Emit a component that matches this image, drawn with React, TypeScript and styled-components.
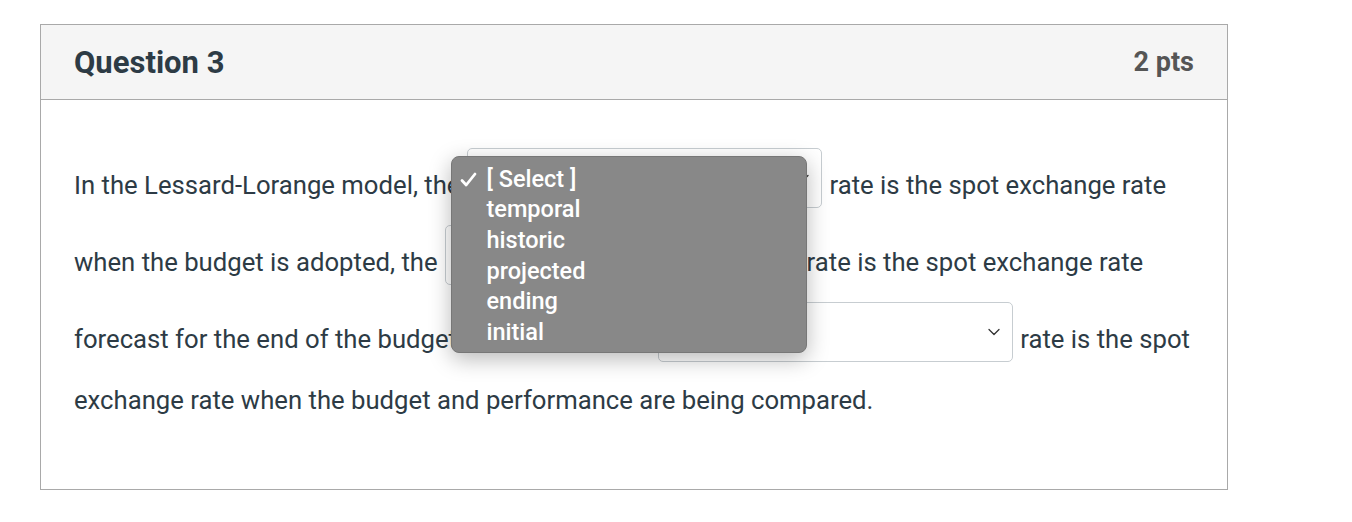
import React from 'react';
import styled, { createGlobalStyle } from 'styled-components';

const GlobalStyle = createGlobalStyle`
  html, body {
    margin: 0;
    padding: 0;
    background: #ffffff;
  }
  body {
    font-family: Roboto, "Liberation Sans", Arial, sans-serif;
    color: #2d3b45;
  }
`;

const Page = styled.div`
  padding: 24px 0 0 40px;
  width: 1352px;
  height: 522px;
  box-sizing: border-box;
`;

const Card = styled.section`
  width: 1188px;
  height: 466px;
  box-sizing: border-box;
  border: 1px solid #a9a9a9;
  display: flex;
  flex-direction: column;
`;

const Header = styled.header`
  height: 75px;
  flex-shrink: 0;
  box-sizing: border-box;
  background: #f5f5f5;
  border-bottom: 1px solid #a9a9a9;
  display: flex;
  align-items: center;
  justify-content: space-between;
  padding: 0 33px 0 33px;
`;

const Title = styled.h2`
  margin: 0;
  font-size: 31px;
  font-weight: 700;
  color: #2d3b45;
`;

const Points = styled.span`
  font-size: 27px;
  font-weight: 700;
  color: #555555;
`;

const Body = styled.div`
  padding: 39px 33px 0 33px;
  display: flex;
  flex-direction: column;
  font-size: 25.7px;
  color: #2d3b45;
`;

const Line = styled.div<{ $h?: number }>`
  display: flex;
  align-items: center;
  height: ${(p) => p.$h ?? 77}px;
  gap: 7px;
  white-space: nowrap;
`;

const Text = styled.span<{ $drop?: boolean }>`
  padding-top: ${(p) => (p.$drop ? 14 : 0)}px;
`;

const SelectWrap = styled.div`
  position: relative;
  flex-shrink: 0;
`;

const SelectBox = styled.div`
  width: 355px;
  height: 60px;
  box-sizing: border-box;
  border: 1px solid #c7cdd1;
  border-radius: 5px;
  background: #ffffff;
  display: flex;
  align-items: center;
  justify-content: space-between;
  padding: 0 12px 0 14px;
  font-size: 22px;
  color: #2d3b45;
`;

const Chevron = () => (
  <svg width="12" height="8" viewBox="0 0 12 8">
    <path d="M1 1.5l5 5 5-5" fill="none" stroke="#333" strokeWidth="1.3" strokeLinecap="round" strokeLinejoin="round" />
  </svg>
);

const Select = ({ children }: { children?: React.ReactNode }) => (
  <SelectWrap>
    <SelectBox>
      <span>[ Select ]</span>
      <Chevron />
    </SelectBox>
    {children}
  </SelectWrap>
);

const Popup = styled.ul`
  position: absolute;
  left: -16px;
  top: 8px;
  width: 356px;
  height: 197px;
  box-sizing: border-box;
  margin: 0;
  padding: 7px 0 0 0;
  list-style: none;
  background: #888888;
  border: 1px solid #777777;
  border-radius: 8px;
  box-shadow: 0 6px 22px rgba(0, 0, 0, 0.28);
  z-index: 10;
`;

const Option = styled.li`
  height: 30.6px;
  display: flex;
  align-items: center;
  padding-left: 34px;
  position: relative;
  font-size: 23.5px;
  font-weight: 500;
  color: #ffffff;
`;

const Check = styled.svg`
  position: absolute;
  left: 8px;
  top: 8px;
`;

const options = ['[ Select ]', 'temporal', 'historic', 'projected', 'ending', 'initial'];

export default function App() {
  return (
    <Page>
      <GlobalStyle />
      <Card>
        <Header>
          <Title>Question 3</Title>
          <Points>2 pts</Points>
        </Header>
        <Body>
          <Line>
            <Text $drop>In the Lessard-Lorange model, the</Text>
            <Select>
              <Popup>
                {options.map((o, i) => (
                  <Option key={o}>
                    {i === 0 && (
                      <Check width="17" height="15" viewBox="0 0 17 15">
                        <path d="M2 8.5l4.2 4.5L15 2" fill="none" stroke="#fff" strokeWidth="2.8" strokeLinecap="round" strokeLinejoin="round" />
                      </Check>
                    )}
                    {o}
                  </Option>
                ))}
              </Popup>
            </Select>
            <Text $drop>rate is the spot exchange rate</Text>
          </Line>
          <Line>
            <Text $drop>when the budget is adopted, the</Text>
            <Select />
            <Text $drop>rate is the spot exchange rate</Text>
          </Line>
          <Line>
            <Text $drop>forecast for the end of the budget period, and the&nbsp;&nbsp;&nbsp;</Text>
            <Select />
            <Text $drop>rate is the spot</Text>
          </Line>
          <Line $h={60}>
            <Text>exchange rate when the budget and performance are being compared.</Text>
          </Line>
        </Body>
      </Card>
    </Page>
  );
}
